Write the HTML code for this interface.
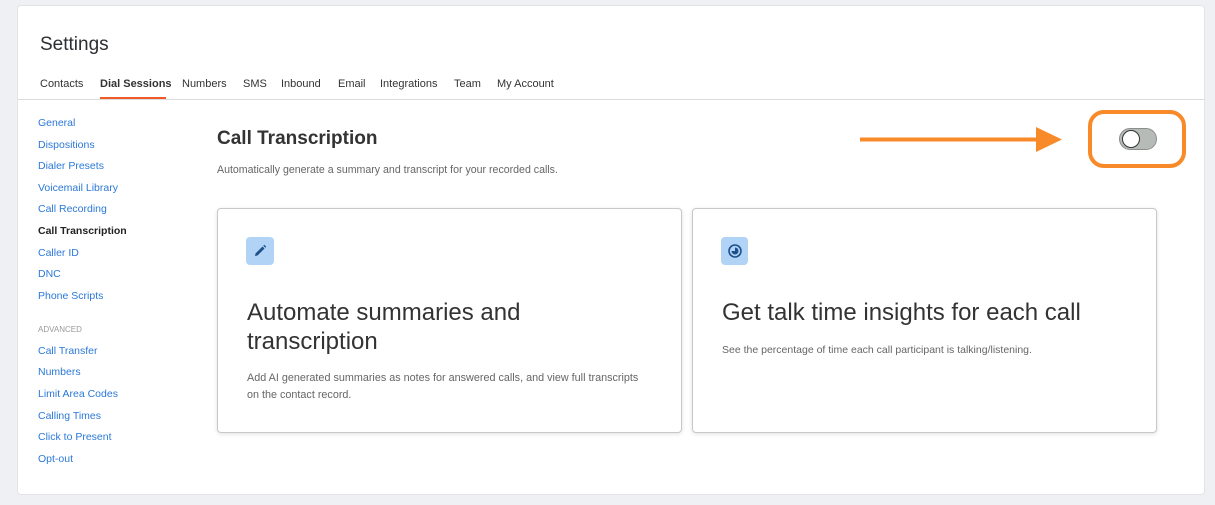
<!DOCTYPE html><html><head><style>
body{margin:0;width:1215px;height:505px;background:#eff0f4;font-family:"Liberation Sans",sans-serif;position:relative;overflow:hidden}
.a{position:absolute;white-space:nowrap}
.card{position:absolute;left:17px;top:5px;width:1188px;height:490px;background:#fff;border:1px solid #e2e4e8;border-radius:4px;box-sizing:border-box}
.tab{font-size:11px;color:#333;top:78px}
.side{font-size:10.5px;color:#2b78d8;left:38px}
.box{position:absolute;top:208px;height:225px;background:#fff;border:1px solid #c8c8c8;border-radius:4px;box-shadow:0 1px 4px rgba(0,0,0,.12);box-sizing:border-box}
.ic{position:absolute;left:28px;top:28px;width:28px;height:28px;background:#b1d3f5;border-radius:4px}
</style></head><body>
<div class="card"></div>
<div class="a" style="left:40px;top:34px;font-size:19px;color:#2c2f33">Settings</div>
<div class="a tab" style="left:40px">Contacts</div>
<div class="a tab" style="left:100px;font-weight:bold">Dial Sessions</div>
<div class="a" style="left:100px;top:97px;width:66px;height:3px;background:#f05a28"></div>
<div class="a tab" style="left:182px">Numbers</div>
<div class="a tab" style="left:243px">SMS</div>
<div class="a tab" style="left:281px">Inbound</div>
<div class="a tab" style="left:338px">Email</div>
<div class="a tab" style="left:380px">Integrations</div>
<div class="a tab" style="left:454px">Team</div>
<div class="a tab" style="left:497px">My Account</div>
<div class="a" style="left:18px;top:99px;width:1186px;height:1px;background:#dcdcdc"></div>
<div class="a side" style="top:117px">General</div>
<div class="a side" style="top:139px">Dispositions</div>
<div class="a side" style="top:160px">Dialer Presets</div>
<div class="a side" style="top:182px">Voicemail Library</div>
<div class="a side" style="top:203px">Call Recording</div>
<div class="a side" style="top:225px;color:#222;font-weight:bold">Call Transcription</div>
<div class="a side" style="top:247px">Caller ID</div>
<div class="a side" style="top:268px">DNC</div>
<div class="a side" style="top:290px">Phone Scripts</div>
<div class="a side" style="top:325px;color:#999;font-size:8px">ADVANCED</div>
<div class="a side" style="top:345px">Call Transfer</div>
<div class="a side" style="top:366px">Numbers</div>
<div class="a side" style="top:388px">Limit Area Codes</div>
<div class="a side" style="top:410px">Calling Times</div>
<div class="a side" style="top:431px">Click to Present</div>
<div class="a side" style="top:453px">Opt-out</div>
<div class="a" style="left:217px;top:128px;font-size:19px;font-weight:bold;color:#333">Call Transcription</div>
<div class="a" style="left:217px;top:164px;font-size:10.6px;color:#666">Automatically generate a summary and transcript for your recorded calls.</div>
<svg class="a" style="left:858px;top:125px" width="210" height="30"><line x1="2" y1="14.5" x2="182" y2="14.5" stroke="#f88a2a" stroke-width="4"/><path d="M178 2 L204 14.5 L178 27Z" fill="#f88a2a"/></svg>
<div class="a" style="left:1088px;top:110px;width:98px;height:58px;border:4px solid #f88a2a;border-radius:16px;box-sizing:border-box"></div>
<div class="a" style="left:1119px;top:128px;width:38px;height:22px;background:#b6bbb8;border:1px solid #8a8f8c;border-radius:11px;box-sizing:border-box"></div>
<div class="a" style="left:1122px;top:130px;width:16px;height:16px;background:#fff;border:1px solid #333;border-radius:50%"></div>
<div class="box" style="left:217px;width:465px">
<div class="ic"><svg width="28" height="28"><path d="M9 19 L9.5 16.5 L16.5 9.5 L18.5 11.5 L11.5 18.5Z M17.3 8.7 L18.2 7.8 L20.2 9.8 L19.3 10.7Z" fill="#1d4f8c"/></svg></div>
<div class="a" style="left:29px;top:89px;font-size:24px;line-height:29px;color:#333">Automate summaries and<br>transcription</div>
<div class="a" style="left:29px;top:161px;font-size:10.8px;line-height:17px;color:#666">Add AI generated summaries as notes for answered calls, and view full transcripts<br>on the contact record.</div>
</div>
<div class="box" style="left:692px;width:465px">
<div class="ic" style="width:27px"><svg width="27" height="28"><circle cx="14" cy="14" r="6" fill="none" stroke="#1d4f8c" stroke-width="1.6"/><path d="M14 10.5 A3.5 3.5 0 1 1 10.5 14 L14 14Z" fill="#1d4f8c"/></svg></div>
<div class="a" style="left:29px;top:90px;font-size:24px;color:#333">Get talk time insights for each call</div>
<div class="a" style="left:29px;top:135px;font-size:10.5px;color:#666">See the percentage of time each call participant is talking/listening.</div>
</div>
</body></html>
